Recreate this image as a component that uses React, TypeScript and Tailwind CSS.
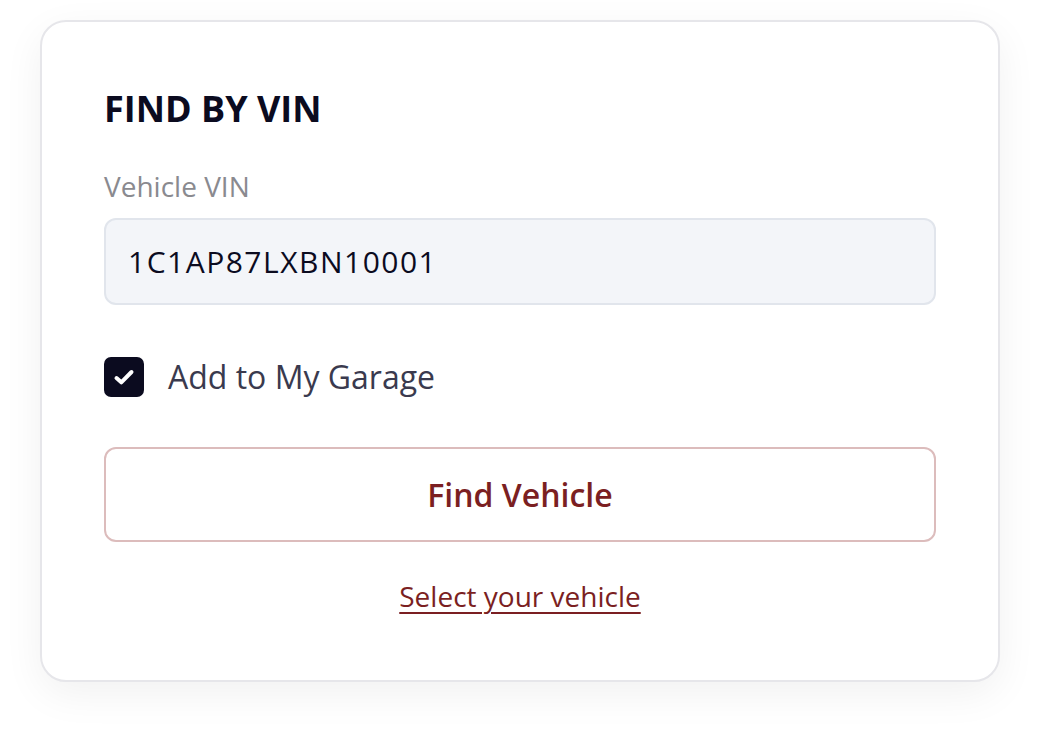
import { useState } from "react";

export default function App() {
  const [vin, setVin] = useState("1C1AP87LXBN10001");
  const [garage, setGarage] = useState(true);

  return (
    <div
      className="min-h-[740px] bg-white px-[40px] pt-[20px]"
      style={{ fontFamily: '"Open Sans", "Noto Sans", sans-serif' }}
    >
      <div className="w-[960px] rounded-[26px] border-2 border-[#e6e6ea] bg-white px-[62px] pb-[64px] pt-[65px] shadow-[0_12px_40px_rgba(0,0,0,0.06)]">
        <h2 className="text-[36px] font-bold leading-[44px] text-[#0b0b1f]">FIND BY VIN</h2>

        <label className="mt-[35px] block text-[28px] leading-[40px] text-[#8a8a8f]">Vehicle VIN</label>
        <input
          value={vin}
          onChange={(e) => setVin(e.target.value)}
          className="mt-[12px] block h-[87px] w-full rounded-[12px] border-2 border-[#e1e5ec] bg-[#f3f5f9] px-[22px] text-[30px] tracking-[1.5px] text-[#0b0b1f] outline-none"
        />

        <button
          onClick={() => setGarage((g) => !g)}
          className="mt-[52px] flex items-center gap-[24px]"
        >
          <span
            className={`flex h-[40px] w-[40px] items-center justify-center rounded-[7px] ${
              garage ? "bg-[#0b0b1f]" : "border-2 border-[#0b0b1f] bg-white"
            }`}
          >
            {garage && (
              <svg width="24" height="24" viewBox="0 0 24 24" fill="none">
                <path
                  d="M4.5 13l4.8 4.3L19.5 7"
                  stroke="white"
                  strokeWidth="4"
                  strokeLinecap="round"
                  strokeLinejoin="round"
                />
              </svg>
            )}
          </span>
          <span className="text-[32px] leading-[40px] text-[#3a3a4e]">Add to My Garage</span>
        </button>

        <button className="mt-[50px] flex h-[95px] w-full items-center justify-center rounded-[12px] border-2 border-[#dcbcbc] bg-white text-[32px] font-semibold text-[#7b1f22]">
          Find Vehicle
        </button>

        <div className="mt-[34px] text-center">
          <a href="#" className="text-[28px] leading-[40px] text-[#7b1f22] underline underline-offset-[5px] decoration-[2px]">
            Select your vehicle
          </a>
        </div>
      </div>
    </div>
  );
}
